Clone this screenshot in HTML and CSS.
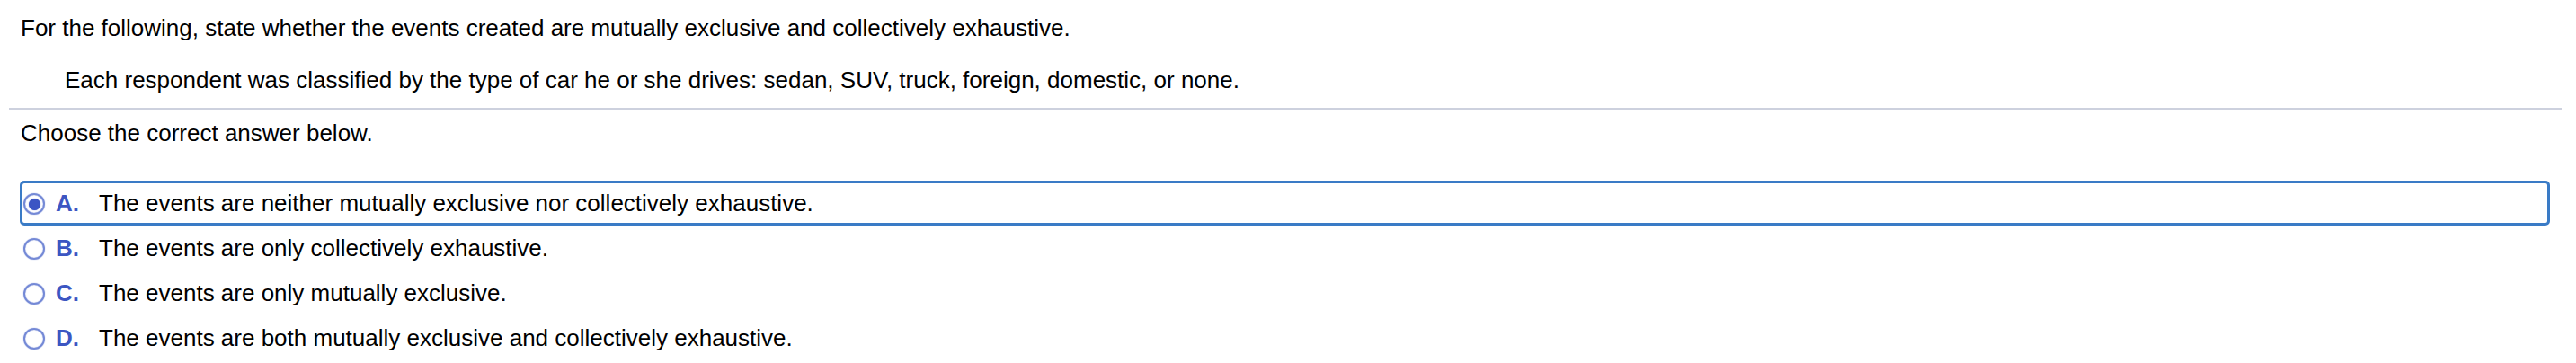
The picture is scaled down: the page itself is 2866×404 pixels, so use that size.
FILE: index.html
```html
<!DOCTYPE html>
<html lang="en">
<head>
  <meta charset="UTF-8" />
  <title>Question</title>
  <link rel="stylesheet" href="styles.css">
</head>
<body>

<div class="question">
  <p class="prompt">For the following, state whether the events created are mutually exclusive and collectively exhaustive.</p>
  <p class="scenario">Each respondent was classified by the type of car he or she drives: sedan, SUV, truck, foreign, domestic, or none.</p>
</div>

<hr class="divider">

<p class="instruction">Choose the correct answer below.</p>

<!-- Choices -->
<ul class="choices">
  <li class="choice selected">
    <span class="radio"></span>
    <span class="letter">A.</span>
    <span class="answer">The events are neither mutually exclusive nor collectively exhaustive.</span>
  </li>
  <li class="choice">
    <span class="radio"></span>
    <span class="letter">B.</span>
    <span class="answer">The events are only collectively exhaustive.</span>
  </li>
  <li class="choice">
    <span class="radio"></span>
    <span class="letter">C.</span>
    <span class="answer">The events are only mutually exclusive.</span>
  </li>
  <li class="choice">
    <span class="radio"></span>
    <span class="letter">D.</span>
    <span class="answer">The events are both mutually exclusive and collectively exhaustive.</span>
  </li>
</ul>

</body>
</html>
```

FILE: styles.css
```css
body {
  font-family: "Liberation Sans", Arial, sans-serif;
  font-size: 26px;
  line-height: 30px;
  color: #000;
  background: #fff;
  margin: 0;
  padding: 16px 16px 0 10px;
}

p {
  margin: 0;
}

.prompt {
  margin-left: 13px;
  margin-bottom: 28px;
}

.scenario {
  margin-left: 62px;
  margin-bottom: 16px;
}

.divider {
  border: none;
  height: 2px;
  background: #cdd1de;
  margin: 0 0 11px 0;
}

.instruction {
  margin-left: 13px;
  margin-bottom: 38px;
}

.choices {
  list-style: none;
  margin: 0 13px 0 12px;
  padding: 0;
}

.choice {
  display: flex;
  align-items: center;
  padding: 7px 0 7px 1px;
  border: 3px solid transparent;
  border-radius: 5px;
}

.choice.selected {
  border-color: #3a7bc6;
}

.radio {
  width: 20px;
  height: 20px;
  border: 2.5px solid #7489d6;
  border-radius: 50%;
  box-shadow: 0 0 1px #7489d6, inset 0 0 1px #7489d6;
  margin-top: 2px;
  display: flex;
  align-items: center;
  justify-content: center;
  flex-shrink: 0;
}

.selected .radio::after {
  content: "";
  width: 13px;
  height: 13px;
  border-radius: 50%;
  background: #3c55c4;
  box-shadow: 0 0 1px #3c55c4;
}

.letter {
  width: 48px;
  margin-left: 12px;
  font-weight: bold;
  color: #3c56c2;
}
```
